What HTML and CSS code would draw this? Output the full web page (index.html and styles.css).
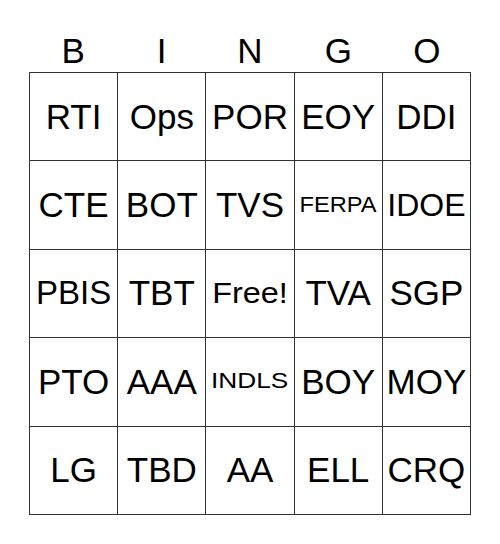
FILE: index.html
```html
<!DOCTYPE html>
<html>
<head>
<meta charset="utf-8">
<link rel="stylesheet" href="styles.css">
</head>
<body>
<div class="card">
  <div class="head">
    <div>B</div><div>I</div><div>N</div><div>G</div><div>O</div>
  </div>
  <div class="grid">
    <div class="cell"><span>RTI</span></div><div class="cell"><span>Ops</span></div><div class="cell"><span>POR</span></div><div class="cell"><span>EOY</span></div><div class="cell"><span>DDI</span></div>
    <div class="cell"><span>CTE</span></div><div class="cell"><span>BOT</span></div><div class="cell"><span>TVS</span></div><div class="cell"><span class="ferpa">FERPA</span></div><div class="cell"><span class="idoe">IDOE</span></div>
    <div class="cell"><span class="pbis">PBIS</span></div><div class="cell"><span>TBT</span></div><div class="cell"><span class="free">Free!</span></div><div class="cell"><span>TVA</span></div><div class="cell"><span>SGP</span></div>
    <div class="cell"><span>PTO</span></div><div class="cell"><span>AAA</span></div><div class="cell"><span class="indls">INDLS</span></div><div class="cell"><span>BOY</span></div><div class="cell"><span>MOY</span></div>
    <div class="cell"><span>LG</span></div><div class="cell"><span>TBD</span></div><div class="cell"><span>AA</span></div><div class="cell"><span>ELL</span></div><div class="cell"><span>CRQ</span></div>
  </div>
</div>
</body>
</html>
```
FILE: styles.css
```css
html, body {
  margin: 0;
  padding: 0;
  background: #fff;
}
body {
  font-family: "Liberation Sans", Arial, sans-serif;
  color: #000;
}
.card {
  width: 442px;
  margin-left: 29px;
}
.head {
  display: grid;
  grid-template-columns: repeat(5, 1fr);
  height: 72px;
  align-items: center;
  text-align: center;
  font-size: 35px;
  padding-top: 30px;
  box-sizing: border-box;
}
.grid {
  display: grid;
  grid-template-columns: repeat(5, 1fr);
  grid-auto-rows: 88.4px;
  border-top: 1px solid #333;
  border-left: 1px solid #333;
}
.cell {
  display: flex;
  align-items: center;
  justify-content: center;
  border-right: 1px solid #333;
  border-bottom: 1px solid #333;
  font-size: 35px;
  white-space: nowrap;
  overflow: hidden;
}
.cell span {
  display: inline-block;
}
.cell .ferpa {
  font-size: 21.5px;
  transform: scaleX(1.1);
}
.cell .indls {
  font-size: 21.5px;
  transform: scaleX(1.22);
}
.cell .free {
  font-size: 30px;
  transform: scaleX(1.08);
}
.cell .pbis {
  font-size: 33px;
}
.cell .idoe {
  font-size: 32px;
}
```
